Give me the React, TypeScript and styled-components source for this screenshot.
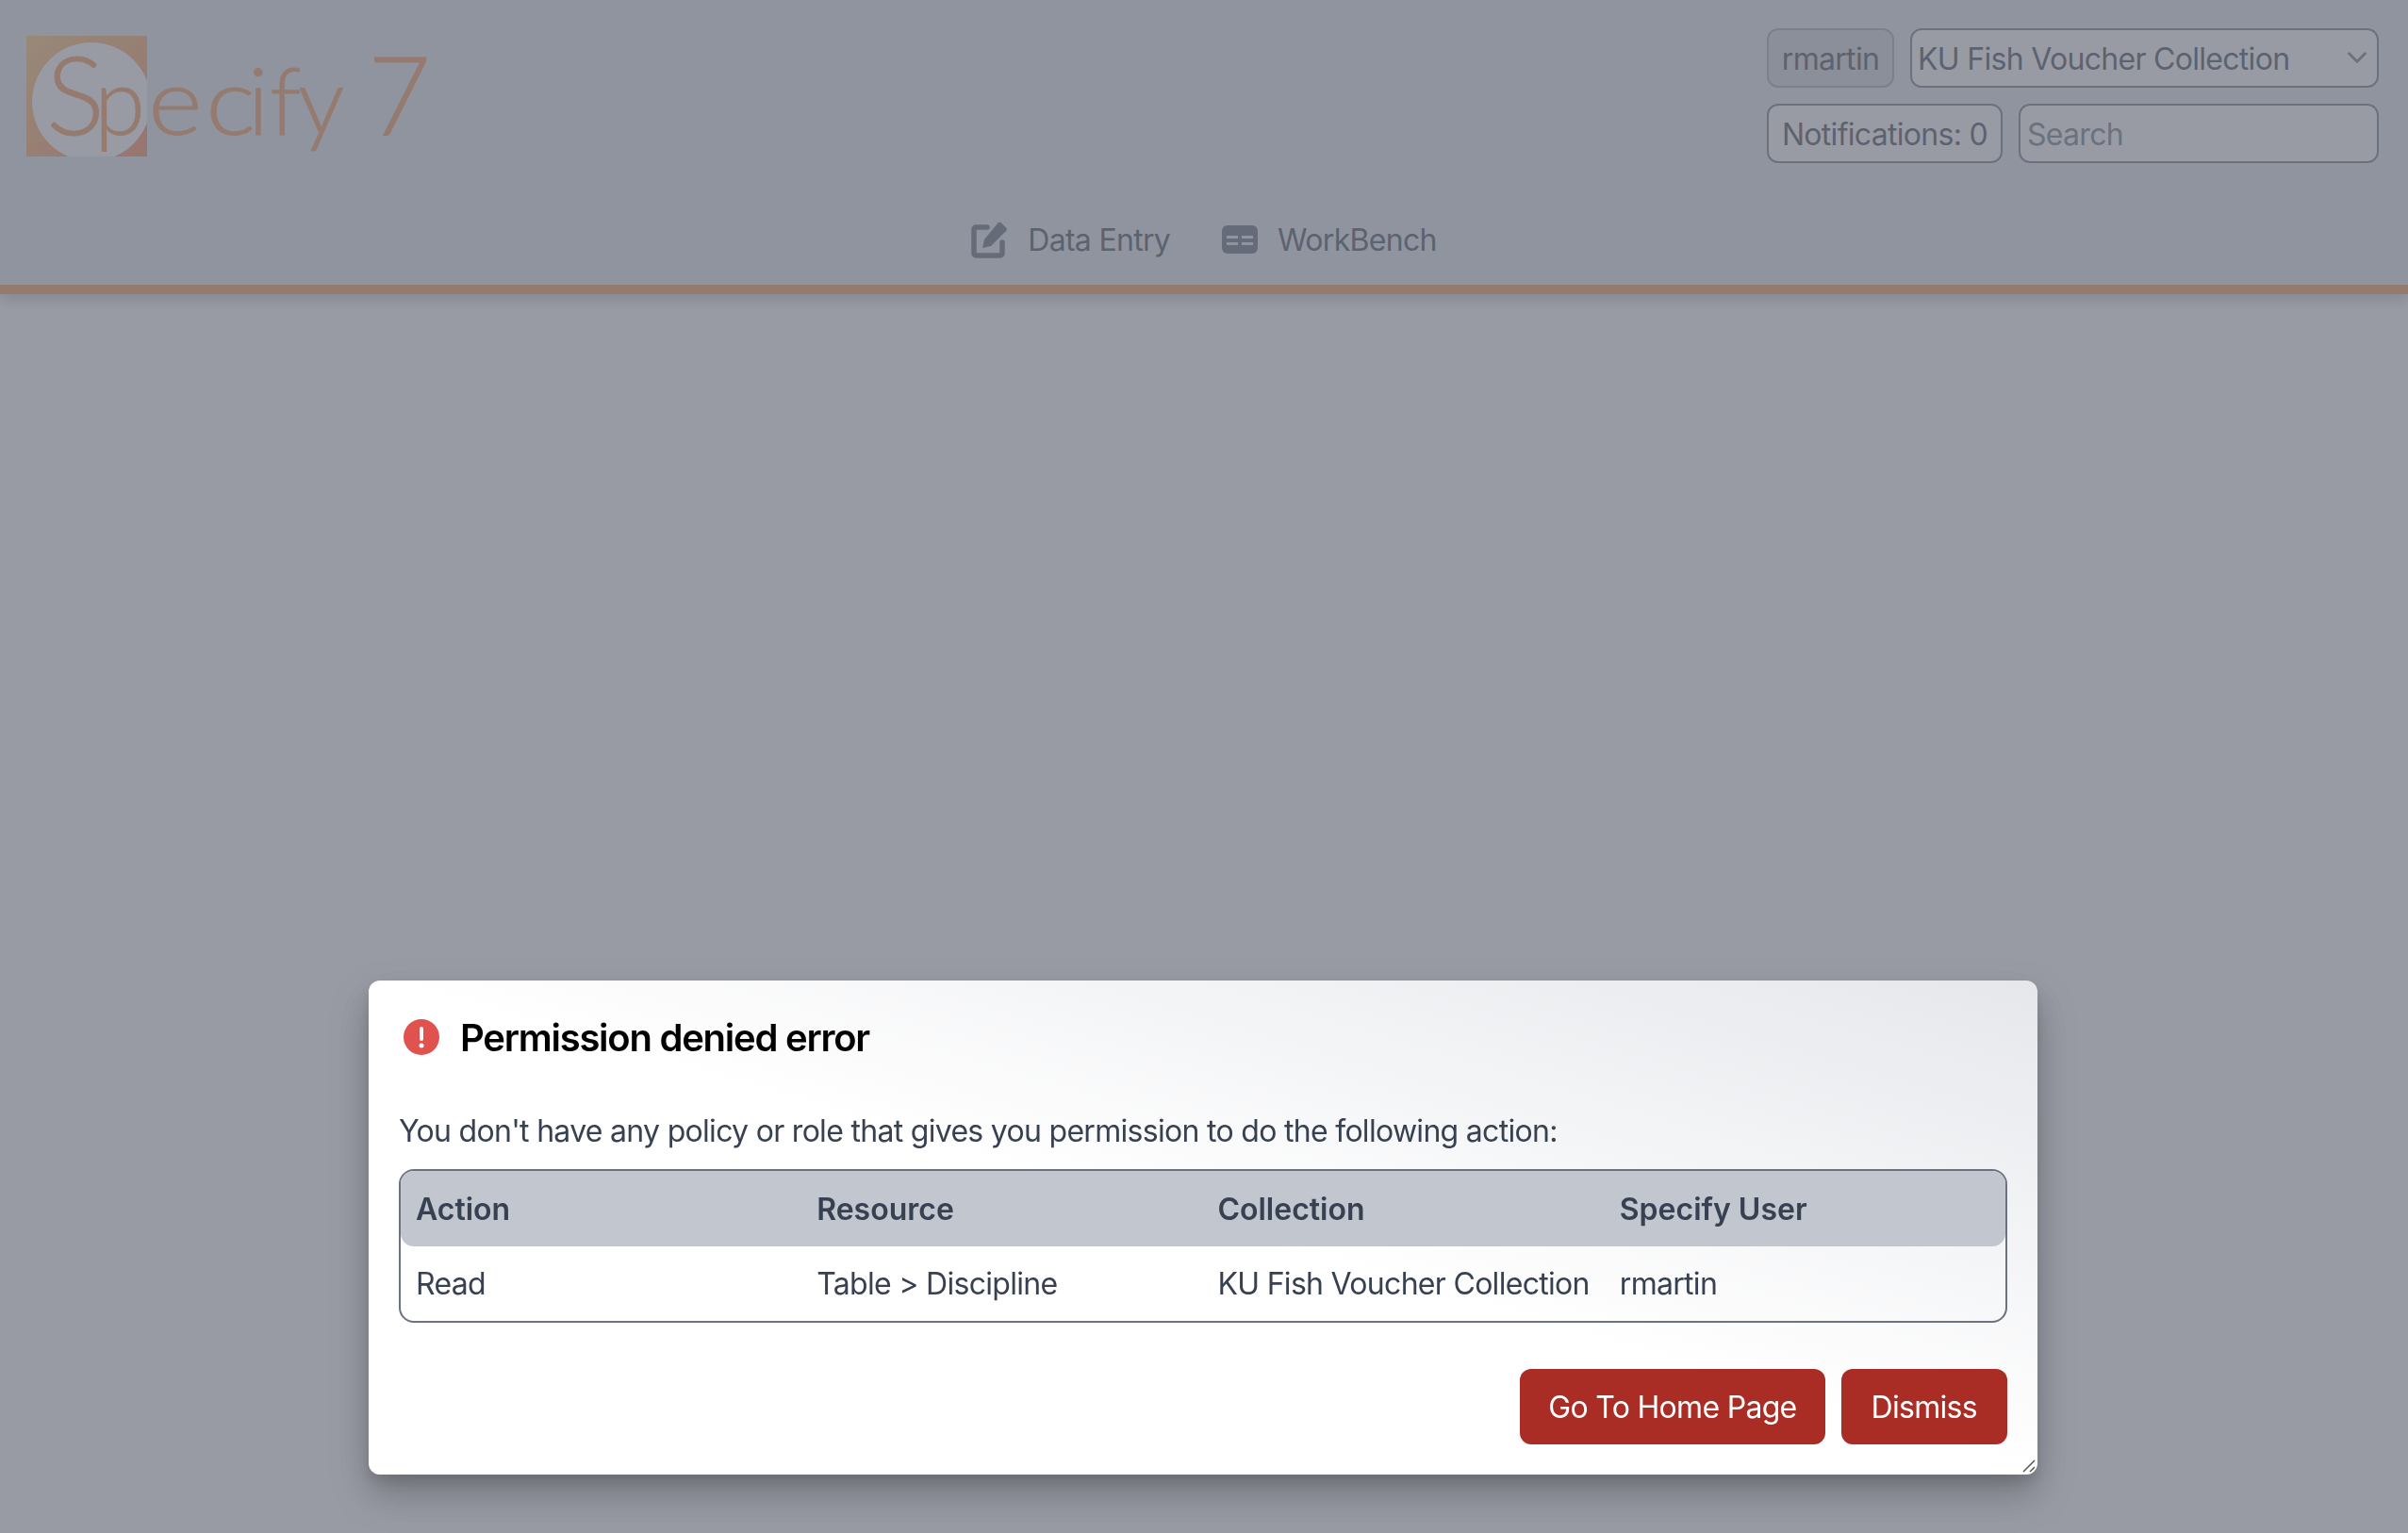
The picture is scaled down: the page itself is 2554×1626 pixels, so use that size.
import React from 'react'
import styled, { createGlobalStyle } from 'styled-components'
import { ChevronDown } from 'lucide-react'

const GlobalStyles = createGlobalStyle`
  html,
  body {
    margin: 0;
    padding: 0;
    height: 100%;
    background: #ffffff;
    font-family: Inter, "Noto Sans", sans-serif;
  }
  * {
    box-sizing: border-box;
  }
`

const Page = styled.div`
  display: flex;
  flex-direction: column;
  width: 2554px;
  height: 1626px;
  overflow: hidden;
  color: #374151;
  font-size: 32px;
  letter-spacing: -0.7px;
`

const Header = styled.header`
  position: relative;
  z-index: 1;
  display: flex;
  flex-direction: column;
  height: 312px;
  background: #e5e7eb;
  border-bottom: 10px solid #f5944f;
  box-shadow: 0 8px 12px rgba(0, 0, 0, 0.2);
`

const TopRow = styled.div`
  display: flex;
  justify-content: space-between;
  align-items: flex-start;
  padding: 30px 31px 0 28px;
`

const LogoLink = styled.a`
  display: block;
  margin-top: 8px;
  width: 430px;
  height: 128px;
`

const LogoText = styled.text`
  font-family: Lato, sans-serif;
  font-weight: 300;
  letter-spacing: 0;
  fill: #f5944f;
  stroke: #f5944f;
  stroke-width: 0.8px;
`

const Controls = styled.div`
  display: grid;
  grid-template-columns: 135px 17px 98px 17px 382px;
  grid-template-rows: 63px 63px;
  row-gap: 17px;
`

const ControlBox = styled.div<{ $muted?: boolean; $col: string }>`
  display: flex;
  align-items: center;
  justify-content: center;
  grid-column: ${p => p.$col};
  padding-top: 2px;
  border: 2px solid ${p => (p.$muted ? '#9ca3af' : '#6b7280')};
  border-radius: 12px;
  background: ${p => (p.$muted ? '#d1d5db' : '#ffffff')};
  white-space: nowrap;
`

const SelectWrap = styled.div`
  position: relative;
  grid-column: 3 / 6;
  color: #6b7280;

  svg {
    position: absolute;
    right: 6px;
    top: 14px;
    pointer-events: none;
  }
`

const CollectionSelect = styled.select`
  appearance: none;
  width: 100%;
  height: 100%;
  padding: 2px 6px 0;
  border: 2px solid #6b7280;
  border-radius: 12px;
  background: #ffffff;
  color: #374151;
  font: inherit;
  font-size: 32px;
  letter-spacing: inherit;
`

const SearchInput = styled.input`
  grid-column: 5;
  width: 100%;
  height: 100%;
  padding: 2px 7px 0;
  border: 2px solid #6b7280;
  border-radius: 12px;
  background: #ffffff;
  color: #374151;
  font: inherit;
  font-size: 32px;
  letter-spacing: inherit;

  &::placeholder {
    color: #6b7280;
    opacity: 1;
  }
`

const Nav = styled.nav`
  display: flex;
  justify-content: center;
  gap: 55px;
  margin-top: 61px;
`

const NavLink = styled.a`
  display: flex;
  align-items: center;
  gap: 21px;
  height: 40px;
  color: #374151;
`

const Main = styled.main`
  flex: 1;
  background: #ffffff;
`

const Overlay = styled.div`
  position: fixed;
  inset: 0;
  z-index: 2;
  display: flex;
  justify-content: center;
  align-items: flex-end;
  padding: 0 2px 62px 0;
  background: rgba(108, 113, 126, 0.7);
`

const Dialog = styled.section`
  position: relative;
  display: flex;
  flex-direction: column;
  width: 1770px;
  height: 524px;
  padding: 32px;
  border-radius: 12px;
  background: linear-gradient(to bottom left, #e5e7eb 0%, #ffffff 50%, #ffffff 100%);
  box-shadow: 0 20px 40px rgba(0, 0, 0, 0.25), 0 8px 12px rgba(0, 0, 0, 0.1);
`

const DialogHeader = styled.header`
  display: flex;
  align-items: center;
  gap: 22px;
  height: 56px;
  padding-left: 5px;
`

const DialogTitle = styled.h2`
  margin: 0;
  color: #000000;
  font-size: 40px;
  font-weight: 600;
  letter-spacing: -1.25px;
`

const DialogText = styled.p`
  margin: 52px 0 0;
  height: 40px;
  line-height: 40px;
`

const ActionTable = styled.div`
  display: grid;
  grid-template-columns: repeat(4, 1fr);
  grid-template-rows: 80px 79px;
  margin-top: 20px;
  border: 2px solid #6b7280;
  border-radius: 16px;
`

const HeadCell = styled.div`
  display: flex;
  align-items: center;
  padding: 0 16px;
  background: #c1c6cf;
  font-weight: 600;
  letter-spacing: 0;

  &:first-child {
    border-top-left-radius: 14px;
    border-bottom-left-radius: 14px;
  }
  &:nth-child(4) {
    border-top-right-radius: 14px;
    border-bottom-right-radius: 14px;
  }
`

const BodyCell = styled.div`
  display: flex;
  align-items: center;
  padding: 0 16px;
  white-space: nowrap;
`

const DialogFooter = styled.footer`
  display: flex;
  justify-content: flex-end;
  gap: 17px;
  margin-top: auto;
`

const RedButton = styled.button<{ $pad: number }>`
  height: 80px;
  padding: 0 ${p => p.$pad}px;
  border: 0;
  border-radius: 12px;
  background: #a92d25;
  color: #ffffff;
  font: inherit;
  font-size: 32px;
  letter-spacing: inherit;
`

const ResizeHandle = styled.svg`
  position: absolute;
  right: 2px;
  bottom: 2px;
`

const columns = ['Action', 'Resource', 'Collection', 'Specify User']
const row = ['Read', 'Table > Discipline', 'KU Fish Voucher Collection', 'rmartin']

const Logo = () => (
  <svg width="430" height="128" viewBox="0 0 430 128">
    <defs>
      <linearGradient id="logoFill" x1="0" y1="0" x2="1" y2="1">
        <stop offset="0" stopColor="#fac26c" />
        <stop offset="1" stopColor="#ff7f52" />
      </linearGradient>
      <clipPath id="logoSquare">
        <rect width="128" height="128" />
      </clipPath>
    </defs>
    <rect width="128" height="128" fill="url(#logoFill)" />
    <circle cx="69" cy="70" r="63" fill="#ffffff" clipPath="url(#logoSquare)" />
    <LogoText x="21" y="105" fontSize="116">S</LogoText>
    <LogoText x="72" y="105" fontSize="98">p</LogoText>
    <LogoText transform="translate(129 105) scale(1.13 1)" fontSize="98">e</LogoText>
    <LogoText transform="translate(190 105) scale(1.15 1)" fontSize="98">c</LogoText>
    <LogoText x="235 258 288" y="105" fontSize="98">ify</LogoText>
    <LogoText x="362" y="105" fontSize="116">7</LogoText>
  </svg>
)

const EditIcon = () => (
  <svg width="39" height="39" viewBox="0 0 39 39" fill="none">
    <path
      d="M17 6H5a2 2 0 0 0-2 2v26a2 2 0 0 0 2 2h26a2 2 0 0 0 2-2V22"
      stroke="#565e6e"
      strokeWidth="5.500"
      strokeLinecap="round"
      strokeLinejoin="round"
    />
    <path d="M32 1.5l5 5a2.5 2.5 0 0 1 0 3.5L21 26l-9 2 2-9L28.500 1.500a2.500 2.500 0 0 1 3.500 0z" fill="#565e6e" />
  </svg>
)

const TableIcon = () => (
  <svg width="38" height="30" viewBox="0 0 38 30">
    <rect width="38" height="30" rx="6" fill="#565e6e" />
    <path d="M5 11h12v3H5zM21 11h12v3H21zM5 18h12v3H5zM21 18h12v3H21z" fill="#e5e7eb" />
  </svg>
)

const ErrorIcon = () => (
  <svg width="38" height="38" viewBox="0 0 38 38">
    <circle cx="19" cy="19" r="19" fill="#e0524d" />
    <rect x="17" y="8" width="4" height="15" rx="2" fill="#ffffff" />
    <circle cx="19" cy="28" r="2.500" fill="#ffffff" />
  </svg>
)

const App: React.FC = () => (
  <Page>
    <GlobalStyles />
    <Header>
      <TopRow>
        <LogoLink>
          <Logo />
        </LogoLink>
        <Controls>
          <ControlBox $muted $col="1">rmartin</ControlBox>
          <SelectWrap>
            <CollectionSelect defaultValue="fish">
              <option value="fish">KU Fish Voucher Collection</option>
            </CollectionSelect>
            <ChevronDown size={34} strokeWidth={2} />
          </SelectWrap>
          <ControlBox $col="1 / 4">Notifications: 0</ControlBox>
          <SearchInput placeholder="Search" />
        </Controls>
      </TopRow>
      <Nav>
        <NavLink>
          <EditIcon />
          Data Entry
        </NavLink>
        <NavLink>
          <TableIcon />
          WorkBench
        </NavLink>
      </Nav>
    </Header>
    <Main />
    <Overlay>
      <Dialog role="alertdialog">
        <DialogHeader>
          <ErrorIcon />
          <DialogTitle>Permission denied error</DialogTitle>
        </DialogHeader>
        <DialogText>You don't have any policy or role that gives you permission to do the following action:</DialogText>
        <ActionTable>
          {columns.map(c => (
            <HeadCell key={c}>{c}</HeadCell>
          ))}
          {row.map(c => (
            <BodyCell key={c}>{c}</BodyCell>
          ))}
        </ActionTable>
        <DialogFooter>
          <RedButton $pad={30}>Go To Home Page</RedButton>
          <RedButton $pad={32}>Dismiss</RedButton>
        </DialogFooter>
        <ResizeHandle width="14" height="14" viewBox="0 0 14 14">
          <path d="M1 13L13 1M8 13l5-5" stroke="#555" strokeWidth="1.5" fill="none" />
        </ResizeHandle>
      </Dialog>
    </Overlay>
  </Page>
)

export default App
